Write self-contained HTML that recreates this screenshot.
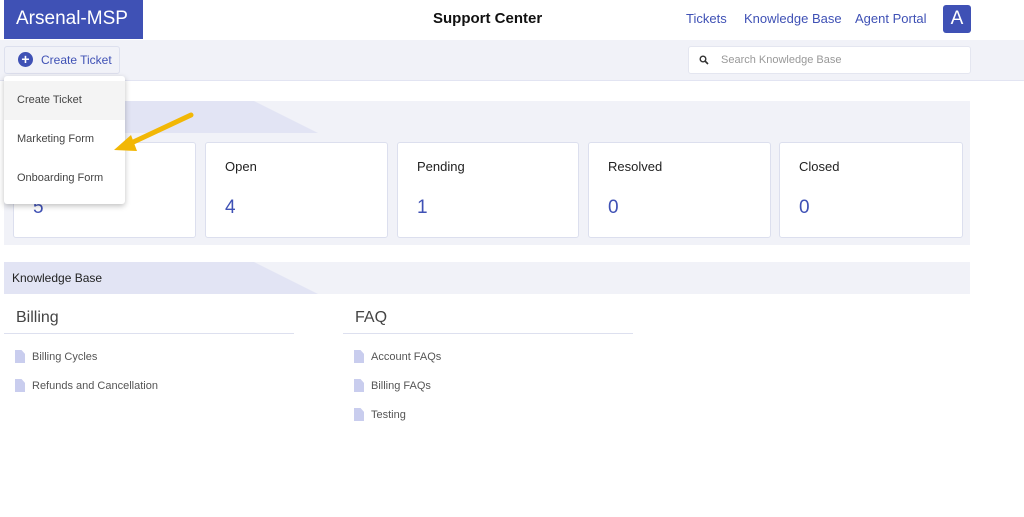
<!DOCTYPE html>
<html><head><style>
*{box-sizing:border-box;margin:0;padding:0}
body{width:1024px;height:517px;background:#fff;font-family:"Liberation Sans",sans-serif;position:relative;overflow:hidden;color:#222}
.a{position:absolute}
.logo{left:4px;top:0;width:139px;height:39px;background:#3f51b5;color:#fff;font-size:19px;line-height:38px;padding-left:12px}
.title{left:433px;top:10px;font-size:15px;font-weight:bold;color:#111}
.nav{top:11px;font-size:13px;color:#3f51b5}
.av{left:943px;top:5px;width:28px;height:28px;background:#3f51b5;color:#fff;border-radius:3px;font-size:19px;text-align:center;line-height:28px}
.bar{left:0;top:40px;width:1024px;height:41px;background:#f1f2f8;border-bottom:1px solid #e2e4f2}
.btn{left:4px;top:46px;width:116px;height:28px;border:1px solid #dde0ee;border-radius:3px;background:#f1f2f8;color:#3f51b5;font-size:12px;line-height:27px;padding-left:36px}
.plus{left:18px;top:52px;width:15px;height:15px;border-radius:50%;background:#3f51b5;color:#fff;font-size:14px;line-height:14px;text-align:center;font-weight:bold}
.search{left:688px;top:46px;width:283px;height:28px;background:#fff;border:1px solid #e4e6f0;border-radius:3px;font-size:11px;color:#999;line-height:26px;padding-left:32px}
.panel{background:#f1f2f8}
.tab{background:#e2e4f4;clip-path:polygon(0 0,250px 0,100% 100%,0 100%)}
.card{top:142px;height:96px;background:#fff;border:1px solid #dcdfee;border-radius:3px}
.card .l{position:absolute;left:19px;top:16px;font-size:13px;color:#222}
.card .n{position:absolute;left:19px;top:54px;font-size:19px;color:#3f51b5}
.dd{left:4px;top:76px;width:121px;height:128px;background:#fff;border-radius:3px;box-shadow:0 2px 6px rgba(0,0,0,.25);padding-top:5px}
.dd div{height:39px;line-height:39px;padding-left:13px;font-size:11px;color:#444}
.sec{font-size:16px;color:#444}
.it{font-size:11px;color:#555}
.doc{width:10px;height:13px;background:#c9cdee;clip-path:polygon(0 0,65% 0,100% 30%,100% 100%,0 100%)}
</style></head><body>
<div class="a logo">Arsenal-MSP</div>
<div class="a title">Support Center</div>
<div class="a nav" style="left:686px">Tickets</div>
<div class="a nav" style="left:744px">Knowledge Base</div>
<div class="a nav" style="left:855px">Agent Portal</div>
<div class="a av">A</div>
<div class="a bar"></div>
<div class="a btn">Create Ticket</div>
<div class="a plus">+</div>
<div class="a search">Search Knowledge Base</div>
<svg class="a" style="left:699px;top:55px" width="10" height="10" viewBox="0 0 10 10"><circle cx="4" cy="4" r="2.8" fill="none" stroke="#333" stroke-width="1.4"/><path d="M6 6l3 3" stroke="#333" stroke-width="1.6"/></svg>

<div class="a panel" style="left:4px;top:101px;width:966px;height:144px"></div>
<div class="a tab" style="left:4px;top:101px;width:314px;height:32px"></div>
<div class="a card" style="left:13px;width:183px"><div class="l">All</div><div class="n">5</div></div>
<div class="a card" style="left:205px;width:183px"><div class="l">Open</div><div class="n">4</div></div>
<div class="a card" style="left:397px;width:182px"><div class="l">Pending</div><div class="n">1</div></div>
<div class="a card" style="left:588px;width:183px"><div class="l">Resolved</div><div class="n">0</div></div>
<div class="a card" style="left:779px;width:184px"><div class="l">Closed</div><div class="n">0</div></div>

<div class="a panel" style="left:4px;top:262px;width:966px;height:32px"></div>
<div class="a tab" style="left:4px;top:262px;width:314px;height:32px"></div>
<div class="a" style="left:12px;top:271px;font-size:12px;color:#222">Knowledge Base</div>

<div class="a sec" style="left:16px;top:309px">Billing</div>
<div class="a" style="left:4px;top:333px;width:290px;height:1px;background:#dde0ef"></div>
<div class="a sec" style="left:355px;top:309px">FAQ</div>
<div class="a" style="left:343px;top:333px;width:290px;height:1px;background:#dde0ef"></div>
<div class="a doc" style="left:15px;top:350px"></div><div class="a it" style="left:32px;top:351px">Billing Cycles</div>
<div class="a doc" style="left:15px;top:379px"></div><div class="a it" style="left:32px;top:380px">Refunds and Cancellation</div>
<div class="a doc" style="left:354px;top:350px"></div><div class="a it" style="left:371px;top:351px">Account FAQs</div>
<div class="a doc" style="left:354px;top:379px"></div><div class="a it" style="left:371px;top:380px">Billing FAQs</div>
<div class="a doc" style="left:354px;top:408px"></div><div class="a it" style="left:371px;top:409px">Testing</div>

<div class="a dd"><div style="background:#f4f4f4">Create Ticket</div><div>Marketing Form</div><div>Onboarding Form</div></div>
<svg class="a" style="left:105px;top:105px" width="95" height="55" viewBox="0 0 95 55"><path d="M86 10 L22 40" stroke="#f2b705" stroke-width="5" stroke-linecap="round"/><path d="M9 45 L26 30 L32 46 Z" fill="#f2b705"/></svg>
</body></html>
